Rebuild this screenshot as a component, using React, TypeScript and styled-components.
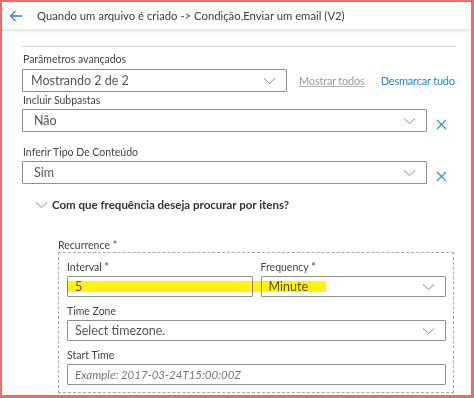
import React from "react";
import styled, { createGlobalStyle } from "styled-components";

const Global = createGlobalStyle`
  html, body { margin: 0; padding: 0; background: #fff; }
  body { font-family: Lato, "Open Sans", sans-serif; }
  * { box-sizing: border-box; }
`;

const Frame = styled.div`
  width: 474px;
  height: 398px;
  border-style: solid;
  border-color: #ee6a6e;
  border-width: 2px 3px 3px 2px;
  overflow: hidden;
  background: #fff;
  position: relative;
`;

const Header = styled.div`
  height: 27px;
  display: flex;
  align-items: center;
  padding-left: 7px;
  background: #fff;
  box-shadow: 0 2px 4px rgba(0, 0, 0, 0.12);
  position: relative;
  z-index: 1;
`;

const Title = styled.span`
  margin-left: 14px;
  font-size: 11.3px;
  color: #3b3b3b;
`;

const Content = styled.div`
  padding: 17px 15px 0 20px;
`;

const Divider = styled.div`
  height: 1px;
  background: #d4d4d4;
`;

const Label = styled.div<{ $top?: number; $bottom?: number; $indent?: number }>`
  font-size: 10.5px;
  line-height: 14px;
  color: #444;
  margin-top: ${(p) => p.$top ?? 0}px;
  margin-left: ${(p) => p.$indent ?? 0}px;
  margin-bottom: ${(p) => p.$bottom ?? 2}px;
  white-space: nowrap;
`;

const Row = styled.div`
  display: flex;
  align-items: center;
  white-space: nowrap;
`;

const Box = styled.div<{ $w?: number; $h?: number; $pad?: number }>`
  width: ${(p) => (p.$w ? `${p.$w}px` : "auto")};
  flex: ${(p) => (p.$w ? "none" : "1")};
  height: ${(p) => p.$h ?? 23}px;
  border: 1px solid #8f8f8f;
  border-radius: 1px;
  display: flex;
  align-items: center;
  padding: 0 10px 0 ${(p) => p.$pad ?? 7}px;
  font-size: 12px;
  color: #555;
  background: #fff;
`;

const BoxText = styled.span<{ $italic?: boolean }>`
  flex: 1;
  font-style: ${(p) => (p.$italic ? "italic" : "normal")};
  color: ${(p) => (p.$italic ? "#777" : "#555")};
  font-size: ${(p) => (p.$italic ? "11.5px" : "12.5px")};
`;

const LinkGray = styled.span`
  margin-left: 12px;
  font-size: 11px;
  letter-spacing: -0.2px;
  color: #9a9a9a;
  text-decoration: underline;
  text-decoration-color: #b5b5b5;
`;

const LinkBlue = styled.span`
  margin-left: 16px;
  font-size: 11px;
  letter-spacing: -0.2px;
  color: #2b7fd0;
`;

const ClearBtn = styled.div`
  width: 32px;
  height: 23px;
  display: flex;
  justify-content: center;
  align-items: center;
  padding-top: 8px;
`;

const Section = styled.div`
  display: flex;
  align-items: center;
  margin-top: 12px;
  margin-left: 13px;
  line-height: 17px;
  font-size: 11.5px;
  font-weight: 700;
  color: #333;
`;

const SectionText = styled.span`
  margin-left: 4px;
`;

const Group = styled.div`
  margin-left: 36px;
  margin-right: 2px;
  margin-top: 25px;
`;

const Dashed = styled.div`
  border: 1px dashed #a8a8a8;
  padding: 7px 7px 7px 8px;
`;

const Grid = styled.div`
  display: grid;
  grid-template-columns: 1fr 1fr;
  column-gap: 8px;
`;

const Highlight = styled.div`
  position: absolute;
  left: 65px;
  top: 279px;
  width: 259px;
  height: 11px;
  background: #fff200;
  opacity: 0.92;
  mix-blend-mode: multiply;
  pointer-events: none;
`;

const Chevron = () => (
  <svg width="13" height="8" viewBox="0 0 13 8">
    <path d="M1 1.5 L6.5 6.5 L12 1.5" fill="none" stroke="#8a8a8a" strokeWidth="1" />
  </svg>
);

const XIcon = () => (
  <svg width="11" height="11" viewBox="0 0 11 11">
    <path d="M1 1 L10 10 M10 1 L1 10" stroke="#3a8ad6" strokeWidth="1.2" />
  </svg>
);

const Select = ({ text, w, h, pad }: { text: string; w?: number; h?: number; pad?: number }) => (
  <Box $w={w} $h={h} $pad={pad}>
    <BoxText>{text}</BoxText>
    <Chevron />
  </Box>
);

export default function App() {
  return (
    <>
      <Global />
      <Frame>
        <Header>
          <svg width="14" height="12" viewBox="0 0 14 12">
            <path d="M13 6 H1.5 M6.5 1 L1.5 6 L6.5 11" fill="none" stroke="#3a7fd0" strokeWidth="1.3" />
          </svg>
          <Title>Quando um arquivo é criado -&gt; Condição,Enviar um email (V2)</Title>
        </Header>
        <Content>
          <Divider />
          <Label $top={5} $bottom={3} $indent={1}>Parâmetros avançados</Label>
          <Row>
            <Select text="Mostrando 2 de 2" w={265} pad={8} />
            <LinkGray>Mostrar todos</LinkGray>
            <LinkBlue>Desmarcar tudo</LinkBlue>
          </Row>
          <Label $top={1} $indent={1}>Incluir Subpastas</Label>
          <Row>
            <Select text="Não" w={405} pad={11} />
            <ClearBtn><XIcon /></ClearBtn>
          </Row>
          <Label $top={13} $indent={1}>Inferir Tipo De Conteúdo</Label>
          <Row>
            <Select text="Sim" w={405} pad={11} />
            <ClearBtn><XIcon /></ClearBtn>
          </Row>
          <Section>
            <Chevron />
            <SectionText>Com que frequência deseja procurar por itens?</SectionText>
          </Section>
          <Group>
            <Label $bottom={0}>Recurrence *</Label>
            <Dashed>
              <Grid>
                <div>
                  <Label>Interval *</Label>
                  <Box $h={21}><BoxText>5</BoxText></Box>
                </div>
                <div>
                  <Label>Frequency *</Label>
                  <Select text="Minute" h={21} />
                </div>
              </Grid>
              <Label $top={7}>Time Zone</Label>
              <Select text="Select timezone." h={21} />
              <Label $top={7}>Start Time</Label>
              <Box $h={21}>
                <BoxText $italic>Example: 2017-03-24T15:00:00Z</BoxText>
              </Box>
            </Dashed>
          </Group>
        </Content>
        <Highlight />
      </Frame>
    </>
  );
}
